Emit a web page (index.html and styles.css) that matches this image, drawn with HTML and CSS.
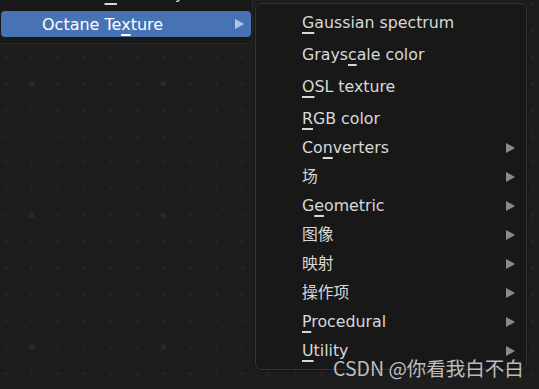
FILE: index.html
```html
<!DOCTYPE html>
<html>
<head>
<meta charset="utf-8">
<link rel="stylesheet" href="styles.css">
</head>
<body>
<div class="canvas">
  <div class="parent-menu">
    <div class="pitem above"><span class="label">Octane <u>G</u>eometry</span></div>
    <div class="pitem active"><span class="label">Octane Te<u>x</u>ture</span>
      <svg class="arrow" width="9" height="10" viewBox="0 0 9 10"><polygon points="0,0 9,5 0,10" /></svg>
    </div>
  </div>

  <div class="submenu">
    <div class="item tall"><span><u>G</u>aussian spectrum</span></div>
    <div class="item tall"><span>Grays<u>c</u>ale color</span></div>
    <div class="item tall"><span><u>O</u>SL texture</span></div>
    <div class="item tall"><span><u>R</u>GB color</span></div>
    <div class="item first-sub"><span>Co<u>n</u>verters</span><svg class="arrow" width="9" height="10" viewBox="0 0 9 10"><polygon points="0,0 9,5 0,10" /></svg></div>
    <div class="item"><span class="cjk">场</span><svg class="arrow" width="9" height="10" viewBox="0 0 9 10"><polygon points="0,0 9,5 0,10" /></svg></div>
    <div class="item"><span>G<u>e</u>ometric</span><svg class="arrow" width="9" height="10" viewBox="0 0 9 10"><polygon points="0,0 9,5 0,10" /></svg></div>
    <div class="item"><span class="cjk">图像</span><svg class="arrow" width="9" height="10" viewBox="0 0 9 10"><polygon points="0,0 9,5 0,10" /></svg></div>
    <div class="item"><span class="cjk">映射</span><svg class="arrow" width="9" height="10" viewBox="0 0 9 10"><polygon points="0,0 9,5 0,10" /></svg></div>
    <div class="item"><span class="cjk">操作项</span><svg class="arrow" width="9" height="10" viewBox="0 0 9 10"><polygon points="0,0 9,5 0,10" /></svg></div>
    <div class="item"><span><u>P</u>rocedural</span><svg class="arrow" width="9" height="10" viewBox="0 0 9 10"><polygon points="0,0 9,5 0,10" /></svg></div>
    <div class="item"><span><u>U</u>tility</span><svg class="arrow" width="9" height="10" viewBox="0 0 9 10"><polygon points="0,0 9,5 0,10" /></svg></div>
  </div>

  <div class="watermark">CSDN @你看我白不白</div>
</div>
</body>
</html>
```
FILE: styles.css
```css
html, body {
  margin: 0;
  padding: 0;
}
body {
  width: 539px;
  height: 389px;
  overflow: hidden;
  background: #1d1d1d;
  font-family: "DejaVu Sans", "Noto Sans CJK SC", sans-serif;
}
.canvas {
  position: relative;
  width: 539px;
  height: 389px;
  overflow: hidden;
  background-color: #1d1d1d;
  background-image:
    conic-gradient(from 270deg at 5px 5px, #2a2a2a 90deg, transparent 0),
    conic-gradient(from 270deg at 3px 3px, #262626 90deg, transparent 0);
  background-size: 131.8px 131.8px, 26.36px 26.36px;
  background-position: 29px 81px, 4px 3px;
}
u {
  text-decoration: underline;
  text-underline-offset: 4px;
  text-decoration-thickness: 1.5px;
}
.parent-menu {
  position: absolute;
  left: -10px;
  top: -30px;
  width: 263px;
  padding: 14px 0 6px 10px;
  box-sizing: border-box;
  background: #181818;
  border: 1px solid #2a2a2a;
  border-radius: 6px;
  display: flex;
  flex-direction: column;
}
.pitem {
  height: 26px;
  width: 250px;
  display: flex;
  align-items: center;
  padding-left: 41px;
  padding-right: 7px;
  box-sizing: border-box;
  font-size: 16px;
  color: #d8d8d8;
  border-radius: 4px;
}
.pitem.above {
  padding-bottom: 10px;
}
.pitem .label {
  flex: 1;
}
.pitem.active {
  background: #4772b3;
  color: #ffffff;
}
.pitem.active .arrow {
  fill: #b4c6e6;
}
.submenu {
  position: absolute;
  left: 255px;
  top: 3px;
  width: 272px;
  height: 367px;
  box-sizing: border-box;
  background: #181818;
  border: 1px solid #343434;
  border-radius: 6px;
  box-shadow: 0 1px 3px rgba(0,0,0,0.4);
  padding: 2px 11px 0 46px;
  display: flex;
  flex-direction: column;
}
.item {
  height: 29px;
  display: flex;
  align-items: center;
  justify-content: space-between;
  font-size: 15.8px;
  color: #d8d8d8;
  flex-shrink: 0;
}
.item .cjk {
  position: relative;
  top: -1px;
}
.item.tall {
  height: 32px;
}
.item.first-sub {
  margin-top: -1px;
}
.arrow {
  fill: #8a8a8a;
  flex-shrink: 0;
}
.watermark {
  position: absolute;
  left: 333px;
  top: 355px;
  font-family: "Noto Sans CJK SC", sans-serif;
  font-size: 19.5px;
  line-height: 26px;
  color: rgba(235, 235, 235, 0.78);
  white-space: nowrap;
}
```
